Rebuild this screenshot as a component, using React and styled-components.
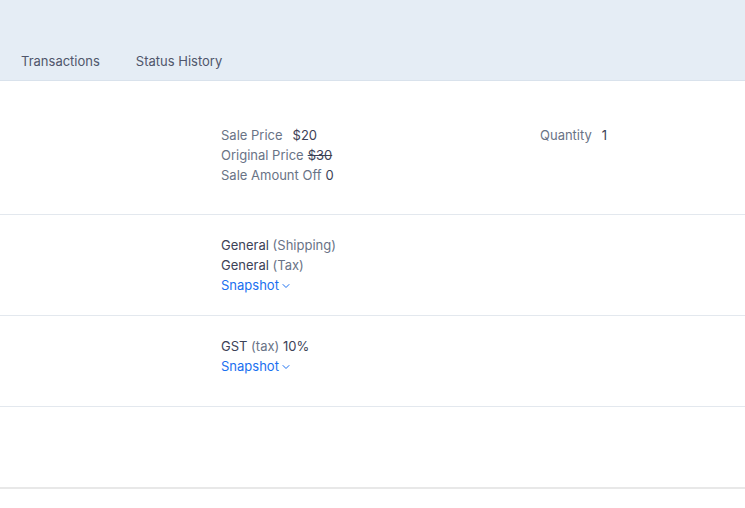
import React from "react";
import styled, { createGlobalStyle } from "styled-components";

const Global = createGlobalStyle`
  html, body { margin: 0; padding: 0; background: #ffffff; }
  body { font-family: Inter, "Noto Sans", "Liberation Sans", sans-serif; -webkit-font-smoothing: antialiased; }
`;

const Page = styled.div`
  width: 745px;
  height: 508px;
  display: flex;
  flex-direction: column;
  background: #fff;
`;

const Header = styled.div`
  height: 81px;
  background: #e5edf5;
  border-bottom: 1px solid #d9e2ec;
  display: flex;
  align-items: flex-end;
  padding: 0 0 0 21px;
  gap: 36px;
  box-sizing: border-box;
`;

const Tab = styled.div`
  font-size: 13px;
  line-height: 20px;
  color: #4f566b;
  padding-bottom: 9px;
`;

const Section = styled.div`
  display: flex;
  padding: ${(p) => p.$pad};
  border-bottom: 1px solid #e3e8ee;
`;

const Spacer = styled.div`
  width: 221px;
  flex: none;
`;

const Column = styled.div`
  width: ${(p) => p.$w || "auto"};
  flex: none;
  display: flex;
  flex-direction: column;
`;

const Line = styled.div`
  font-size: 13px;
  line-height: 20px;
  color: #3c4257;
  white-space: nowrap;
`;

const Label = styled.span`
  color: #697386;
`;

const Value = styled.span`
  color: #3c4257;
  margin-left: ${(p) => p.$gap || "4px"};
  text-decoration: ${(p) => (p.$strike ? "line-through" : "none")};
`;

const Muted = styled.span`
  color: #697386;
`;

const Link = styled.a`
  font-size: 13px;
  line-height: 20px;
  color: #1a6ff0;
  display: inline-flex;
  align-items: center;
  gap: 3px;
  cursor: pointer;
  text-decoration: none;
`;

const Footer = styled.div`
  height: 80px;
  border-bottom: 2px solid #e8e8e8;
`;

const Chevron = () => (
  <svg width="8" height="8" viewBox="0 0 8 8" fill="none" style={{ marginTop: 2 }}>
    <path d="M1 2.5L4 5.5L7 2.5" stroke="#1a6ff0" strokeWidth="1" strokeLinecap="round" strokeLinejoin="round" />
  </svg>
);

export default function App() {
  return (
    <Page>
      <Global />
      <Header>
        <Tab>Transactions</Tab>
        <Tab>Status History</Tab>
      </Header>
      <Section $pad="44px 0 29px 0">
        <Spacer />
        <Column $w="319px">
          <Line>
            <Label>Sale Price</Label>
            <Value $gap="10px">$20</Value>
          </Line>
          <Line>
            <Label>Original Price</Label>
            <Value $strike>$30</Value>
          </Line>
          <Line>
            <Label>Sale Amount Off</Label>
            <Value>0</Value>
          </Line>
        </Column>
        <Column>
          <Line>
            <Label>Quantity</Label>
            <Value $gap="10px">1</Value>
          </Line>
        </Column>
      </Section>
      <Section $pad="20px 0 20px 0">
        <Spacer />
        <Column>
          <Line>
            General <Muted>(Shipping)</Muted>
          </Line>
          <Line>
            General <Muted>(Tax)</Muted>
          </Line>
          <Line>
            <Link>
              Snapshot <Chevron />
            </Link>
          </Line>
        </Column>
      </Section>
      <Section $pad="20px 0 30px 0">
        <Spacer />
        <Column>
          <Line>
            GST <Muted>(tax)</Muted> 10%
          </Line>
          <Line>
            <Link>
              Snapshot <Chevron />
            </Link>
          </Line>
        </Column>
      </Section>
      <Footer />
    </Page>
  );
}
